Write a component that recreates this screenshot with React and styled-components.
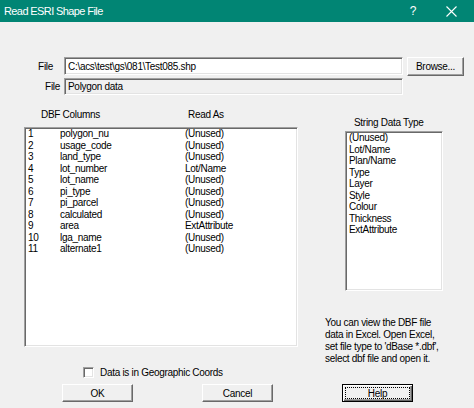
import React from "react";
import styled, {createGlobalStyle} from "styled-components";

const GlobalStyle = createGlobalStyle`
  html, body {
    margin: 0;
    padding: 0;
    background: #f0f0f0;
  }
  body {
    font-family: "Liberation Sans", Arial, sans-serif;
    font-size: 10px;
    letter-spacing: -0.3px;
    color: #000;
  }
`;

const Window = styled.div`
  width: 474px;
  height: 408px;
  display: flex;
  flex-direction: column;
  background: #f0f0f0;
  overflow: hidden;
`;

const TitleBar = styled.div`
  height: 22px;
  flex-shrink: 0;
  display: flex;
  align-items: center;
  padding-left: 4px;
  background: #018574;
  color: #fff;
  font-size: 11px;
  letter-spacing: -0.6px;
`;

const TitleText = styled.div`
  flex: 1;
`;

const TitleButton = styled.div`
  width: ${p => p.$w}px;
  height: 22px;
  display: flex;
  align-items: center;
  justify-content: center;
  font-size: 12px;
  letter-spacing: 0;
`;

const Body = styled.div`
  flex: 1;
  display: flex;
  flex-direction: column;
  padding: 35px 0 0 24px;
`;

const FileGrid = styled.div`
  display: grid;
  grid-template-columns: 36px 339px 57px;
  column-gap: 4px;
  row-gap: 2px;
  align-items: start;
`;

const FieldLabel = styled.div`
  justify-self: end;
  align-self: center;
  margin-right: ${p => p.$offset || 0}px;
`;

const Sunken = styled.div`
  box-sizing: border-box;
  border: 1px solid;
  border-color: #a0a0a0 #ffffff #ffffff #a0a0a0;
  box-shadow: inset 1px 1px 0 #696969, inset -1px -1px 0 #e3e3e3;
`;

const TextField = styled(Sunken)`
  height: ${p => p.$h}px;
  background: ${p => (p.$readOnly ? "#f0f0f0" : "#ffffff")};
  display: flex;
  align-items: center;
  padding-left: 3px;
  white-space: nowrap;
`;

const Button = styled.button`
  box-sizing: border-box;
  width: ${p => p.$w || 71}px;
  height: ${p => p.$h || 18}px;
  padding: 0;
  background: #f0f0f0;
  border: 1px solid;
  border-color: ${p => (p.$default ? "#000" : "#ffffff #696969 #696969 #ffffff")};
  box-shadow: ${p =>
    p.$default
      ? "inset 1px 1px 0 #fff, inset -1px -1px 0 #696969, inset -2px -2px 0 #a0a0a0"
      : "inset -1px -1px 0 #a0a0a0"};
  font: inherit;
  letter-spacing: inherit;
  color: #000;
  outline: ${p => (p.$default ? "1px dotted #000" : "none")};
  outline-offset: -4px;
`;

const Main = styled.div`
  display: flex;
  align-items: flex-start;
  margin-top: 14px;
`;

const LeftCol = styled.div`
  width: 274px;
  display: flex;
  flex-direction: column;
`;

const Headers = styled.div`
  display: flex;
  line-height: 12px;
  padding-left: 17px;
  margin-bottom: 6px;
`;

const HeaderCell = styled.div`
  width: ${p => (p.$w ? `${p.$w}px` : "auto")};
`;

const ListBox = styled(Sunken)`
  width: ${p => p.$w}px;
  height: ${p => p.$h}px;
  background: #fff;
  padding-left: ${p => p.$pad}px;
  margin-left: ${p => p.$indent || 0}px;
`;

const ColumnRow = styled.div`
  display: grid;
  grid-template-columns: 32px 125px 1fr;
  line-height: 11.5px;
  white-space: nowrap;
`;

const ListItem = styled.div`
  line-height: 11.5px;
  white-space: nowrap;
`;

const RightCol = styled.div`
  margin-left: 27px;
  padding-top: 8px;
  display: flex;
  flex-direction: column;
`;

const TypeTitle = styled.div`
  line-height: 12px;
  padding-left: 29px;
  margin-bottom: 2px;
`;

const HelpNote = styled.div`
  margin-top: 26px;
  line-height: 12px;
  white-space: nowrap;
`;

const CheckRow = styled.label`
  display: flex;
  align-items: center;
  gap: 6px;
  height: 12px;
  margin-top: 1px;
  padding-left: 59px;
`;

const CheckBox = styled(Sunken)`
  width: 11px;
  height: 11px;
  background: #fff;
`;

const ButtonRow = styled.div`
  display: flex;
  gap: 69px;
  margin-top: 6px;
  padding-left: 38px;
`;

const columns = [
  ["1", "polygon_nu", "(Unused)"],
  ["2", "usage_code", "(Unused)"],
  ["3", "land_type", "(Unused)"],
  ["4", "lot_number", "Lot/Name"],
  ["5", "lot_name", "(Unused)"],
  ["6", "pi_type", "(Unused)"],
  ["7", "pi_parcel", "(Unused)"],
  ["8", "calculated", "(Unused)"],
  ["9", "area", "ExtAttribute"],
  ["10", "lga_name", "(Unused)"],
  ["11", "alternate1", "(Unused)"],
];

const stringTypes = [
  "(Unused)",
  "Lot/Name",
  "Plan/Name",
  "Type",
  "Layer",
  "Style",
  "Colour",
  "Thickness",
  "ExtAttribute",
];

const CloseIcon = () => (
  <svg width="11" height="11" viewBox="0 0 11 11">
    <path d="M0.5 0.5L10.5 10.5M10.5 0.5L0.5 10.5" stroke="#fff" strokeWidth="1.1" fill="none"/>
  </svg>
);

const App = () => {
  return (
    <Window>
      <GlobalStyle/>
      <TitleBar>
        <TitleText>Read ESRI Shape File</TitleText>
        <TitleButton $w={30}>?</TitleButton>
        <TitleButton $w={46}><CloseIcon/></TitleButton>
      </TitleBar>
      <Body>
        <FileGrid>
          <FieldLabel $offset={7}>File</FieldLabel>
          <TextField $h={18}>C:\acs\test\gs\081\Test085.shp</TextField>
          <Button $w={57} $h={19}>Browse...</Button>
          <FieldLabel>File</FieldLabel>
          <TextField $h={17} $readOnly>Polygon data</TextField>
        </FileGrid>
        <Main>
          <LeftCol>
            <Headers>
              <HeaderCell $w={147}>DBF Columns</HeaderCell>
              <HeaderCell>Read As</HeaderCell>
            </Headers>
            <ListBox $w={274} $h={220} $pad={3}>
              {columns.map(([n, name, type]) => (
                <ColumnRow key={n}>
                  <span>{n}</span>
                  <span>{name}</span>
                  <span>{type}</span>
                </ColumnRow>
              ))}
            </ListBox>
          </LeftCol>
          <RightCol>
            <TypeTitle>String Data Type</TypeTitle>
            <ListBox $w={98} $h={160} $pad={3} $indent={20}>
              {stringTypes.map(t => (
                <ListItem key={t}>{t}</ListItem>
              ))}
            </ListBox>
            <HelpNote>
              You can view the DBF file<br/>
              data in Excel. Open Excel,<br/>
              set file type to 'dBase *.dbf',<br/>
              select dbf file and open it.
            </HelpNote>
          </RightCol>
        </Main>
        <CheckRow>
          <CheckBox/>
          <span>Data is in Geographic Coords</span>
        </CheckRow>
        <ButtonRow>
          <Button>OK</Button>
          <Button>Cancel</Button>
          <Button $default>Help</Button>
        </ButtonRow>
      </Body>
    </Window>
  );
};

export default App;
